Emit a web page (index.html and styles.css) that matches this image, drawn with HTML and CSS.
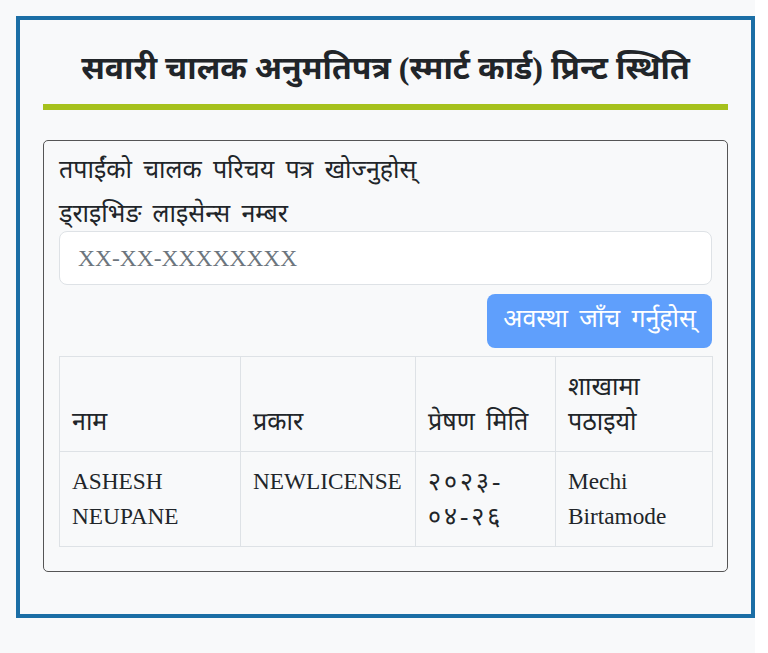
FILE: index.html
```html
<!DOCTYPE html>
<html lang="ne">
<head>
<meta charset="utf-8">
<title>सवारी चालक अनुमतिपत्र (स्मार्ट कार्ड) प्रिन्ट स्थिति</title>
<link rel="stylesheet" href="styles.css">
</head>
<body>
<div class="page">
  <div class="frame">
    <h1 class="title">सवारी चालक अनुमतिपत्र (स्मार्ट कार्ड) प्रिन्ट स्थिति</h1>
    <div class="rule"></div>
    <div class="card">
      <div class="card-head dev">तपाईंको चालक परिचय पत्र खोज्नुहोस्</div>
      <label class="label dev" for="dl">ड्राइभिङ लाइसेन्स नम्बर</label>
      <input class="input" id="dl" type="text" placeholder="XX-XX-XXXXXXXX">
      <div class="actions">
        <button class="btn dev" type="button" disabled>अवस्था जाँच गर्नुहोस्</button>
      </div>
      <table class="table">
        <colgroup>
          <col class="c1"><col class="c2"><col class="c3"><col class="c4">
        </colgroup>
        <thead>
          <tr>
            <th class="dev">नाम</th>
            <th class="dev">प्रकार</th>
            <th class="dev">प्रेषण मिति</th>
            <th class="dev">शाखामा पठाइयो</th>
          </tr>
        </thead>
        <tbody>
          <tr>
            <td>ASHESH NEUPANE</td>
            <td>NEWLICENSE</td>
            <td><span class="date">२०२३-<wbr>०४-२६</span></td>
            <td>Mechi Birtamode</td>
          </tr>
        </tbody>
      </table>
    </div>
  </div>
</div>
</body>
</html>
```
FILE: styles.css
```css
html, body {
  margin: 0;
  padding: 0;
  background: #ffffff;
}
body {
  font-family: "Liberation Serif", "Noto Sans Devanagari", "Noto Serif Devanagari", serif;
  font-size: 23.3px;
  line-height: 1.5;
  color: #212529;
}
.dev {
  font-size: 25px;
  word-spacing: 5px;
}
.page {
  width: 755px;
  min-height: 653px;
  background: #f8f9fa;
  box-sizing: border-box;
  padding: 16px 0 0 16px;
}
.frame {
  width: 739px;
  height: 602px;
  box-sizing: border-box;
  border: 4px solid #1b6ea5;
  padding: 0 23px;
}
.title {
  margin: 0;
  padding-top: 26px;
  height: 58px;
  font-size: 32px;
  line-height: 44px;
  font-weight: 700;
  text-align: center;
  color: #212529;
}
.rule {
  height: 6px;
  background: #a6c11c;
  margin-bottom: 30px;
}
.card {
  border: 1px solid #555;
  border-radius: 5px;
  padding: 11px 15px 24px;
  display: flex;
  flex-direction: column;
}
.card-head {
  line-height: 35px;
  margin-bottom: 9px;
}
.label {
  line-height: 35px;
}
.input {
  height: 54px;
  box-sizing: border-box;
  border: 1px solid #dee2e6;
  border-radius: 8px;
  background: #fff;
  padding: 8px 18px;
  font-family: "Liberation Serif", serif;
  font-size: 23.5px;
  color: #212529;
  outline: none;
}
.input::placeholder {
  color: #6c757d;
}
.actions {
  display: flex;
  justify-content: flex-end;
  margin-top: 9px;
}
.btn {
  height: 54px;
  box-sizing: border-box;
  border: none;
  border-radius: 8px;
  background: #5f9ffc;
  color: #fff;
  font-family: inherit;
  padding: 0 16px;
}
.table {
  margin-top: 8px;
  border-collapse: collapse;
  width: 100%;
  table-layout: fixed;
}
.table th, .table td {
  border: 1px solid #dee2e6;
  padding: 12px;
  text-align: left;
  font-weight: 400;
  line-height: 35px;
}
.table th {
  vertical-align: bottom;
}
.table td {
  vertical-align: top;
}
.date {
  display: block;
  font-size: 25px;
  line-height: 35px;
  letter-spacing: 3px;
}
.c1 { width: 181px; }
.c2 { width: 175px; }
.c3 { width: 140px; }
.c4 { width: 157px; }
```
